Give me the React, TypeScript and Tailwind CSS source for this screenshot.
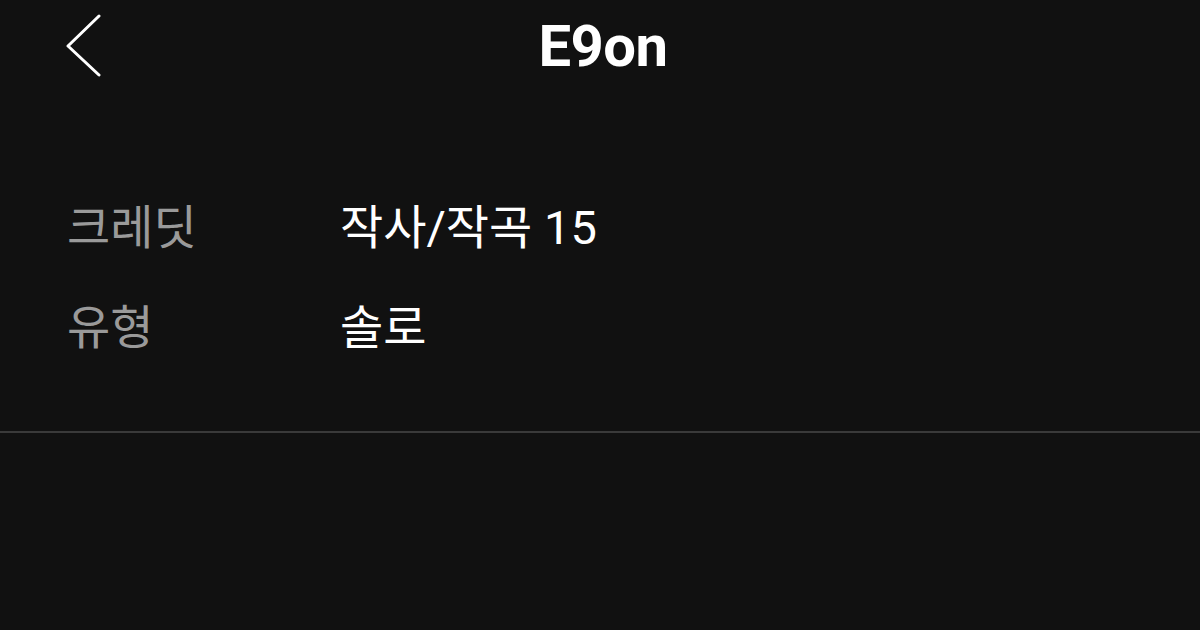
import React from 'react';

const rows = [
  { label: '크레딧', value: '작사/작곡 15' },
  { label: '유형', value: '솔로' },
];

const App: React.FC = () => {
  return (
    <div
      className="w-[1200px] h-[630px] bg-[#111111] text-white overflow-hidden"
      style={{ fontFamily: 'Roboto, "Noto Sans CJK KR", sans-serif' }}
    >
      {/* Header */}
      <header className="flex items-center h-[92px] px-[64px]">
        <button className="w-[40px] h-[64px] flex items-center justify-center">
          <svg width="38" height="64" viewBox="0 0 38 64" fill="none">
            <path d="M34 2 L3 32 L34 61" stroke="#ffffff" strokeWidth="3" strokeLinecap="round" strokeLinejoin="round" />
          </svg>
        </button>
        <h1 className="flex-1 pl-[6px] text-center text-[58px] font-bold leading-none tracking-[-0.5px]">E9on</h1>
        <div className="w-[40px]" />
      </header>

      {/* Details */}
      <section className="pt-[86px] pb-[53px] pl-[67px]">
        {rows.map((row) => (
          <div key={row.label} className="flex h-[100px] items-center text-[47px]">
            <span className="w-[273px] text-[#9a9a9a]">{row.label}</span>
            <span className="text-white">{row.value}</span>
          </div>
        ))}
      </section>
      <div className="h-[2px] bg-[#3a3a3a]" />
    </div>
  );
};

export default App;
